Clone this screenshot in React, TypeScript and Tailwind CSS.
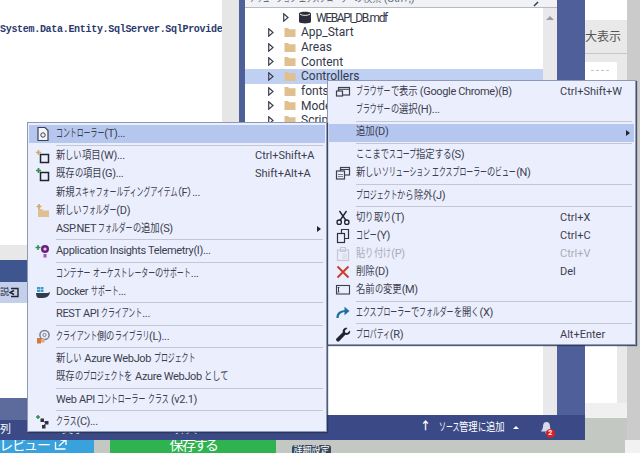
import React from "react";

type MenuEntry =
  | { sep: true }
  | {
      label: string;
      icon?: React.ReactNode;
      shortcut?: string;
      arrow?: boolean;
      active?: boolean;
      disabled?: boolean;
    };

// the screenshot uses a condensed UI font, so kana and kanji runs are squeezed horizontally
const Squeezed = ({ run, size, factor, cls }: { run: string; size: number; factor: number; cls: string }) => (
  <span
    className={`inline-block origin-left whitespace-nowrap [font-feature-settings:normal] ${cls}`}
    style={{ marginRight: -run.length * size * (1 - factor) }}
  >
    {run}
  </span>
);

const Narrow = ({ text }: { text: string }) => {
  const parts = text.match(/[\u30A0-\u30FF]+|[\u3040-\u309F]+|[\u4E00-\u9FFF]+|[^\u3040-\u30FF\u4E00-\u9FFF]+/g) ?? [];
  return (
    <>
      {parts.map((part, i) => {
        if (/[\u30A0-\u30FF]/.test(part))
          return <Squeezed key={i} run={part} size={11.5} factor={0.6} cls="text-[11.5px] scale-x-[0.6]" />;
        if (/[\u3040-\u309F]/.test(part))
          return <Squeezed key={i} run={part} size={11} factor={0.75} cls="text-[11px] scale-x-[0.75]" />;
        if (/[\u4E00-\u9FFF]/.test(part))
          return <Squeezed key={i} run={part} size={11} factor={0.85} cls="text-[11px] scale-x-[0.85]" />;
        return (
          <span key={i} className="tracking-[-0.35px]">
            {part}
          </span>
        );
      })}
    </>
  );
};

const Glyph = ({ children }: { children: React.ReactNode }) => (
  <svg width="16" height="16" viewBox="0 0 16 16" fill="none">
    {children}
  </svg>
);

const ControllerIcon = () => (
  <Glyph>
    <path d="M3 1.500h7l3 3v10H3z" fill="#f4f5fa" stroke="#3c4150" strokeWidth="1.200" />
    <circle cx="8" cy="9" r="2.200" stroke="#3c4150" strokeWidth="1" />
  </Glyph>
);

const NewItemIcon = ({ green }: { green?: boolean }) => (
  <Glyph>
    <rect x="5.500" y="5.500" width="8" height="8" stroke="#20242f" strokeWidth="1.500" />
    <path d="M3.500 1v5M1 3.500h5" stroke={green ? "#2f8f4a" : "#d0a872"} strokeWidth="1.700" />
  </Glyph>
);

const NewFolderIcon = () => (
  <Glyph>
    <path d="M3 6h4l1 1.500h6v6.500H3z" fill="#e0c08f" />
    <path d="M4 1v5M1.500 3.500h5" stroke="#d0a872" strokeWidth="1.700" />
  </Glyph>
);

const InsightsIcon = () => (
  <Glyph>
    <circle cx="10" cy="6" r="4" fill="#68217a" />
    <circle cx="10" cy="6" r="1.600" fill="#e6c8ea" />
    <path d="M8.500 11h3v3.500h-3z" fill="#a05ab0" />
    <path d="M3 2v5M.5 4.500h5" stroke="#2f8f4a" strokeWidth="1.500" />
  </Glyph>
);

const DockerIcon = () => (
  <Glyph>
    <path d="M2 3h3v2.500H2zM5.500 3h3v2.500h-3zM2 6h3v2H2zM5.500 6h3v2h-3z" fill="#3f9cc9" />
    <path d="M1 9h12l2-1c0 3-3 6-7 6H4c-2 0-3-2-3-5z" fill="#2f3b4f" />
  </Glyph>
);

const LibraryIcon = () => (
  <Glyph>
    <circle cx="9.500" cy="6" r="4.600" stroke="#7b7f8c" strokeWidth="1.500" />
    <circle cx="9.500" cy="6" r="1.600" stroke="#7b7f8c" />
    <rect x="2" y="9" width="4" height="5.500" fill="#d9773a" />
    <rect x="6" y="10" width="3.500" height="3.500" fill="#e9a77c" />
  </Glyph>
);

const ClassIcon = () => (
  <Glyph>
    <path d="M3 1v4M1 3h4" stroke="#2f8f4a" strokeWidth="1.400" />
    <rect x="5.500" y="4.500" width="3.500" height="3.500" fill="#2d3140" />
    <rect x="10" y="7" width="3.500" height="3.500" fill="#2d3140" />
    <rect x="7" y="11" width="3.500" height="3.500" fill="#2d3140" />
    <path d="M8 7l3 2M10 10l-1 2" stroke="#2d3140" />
  </Glyph>
);

const BrowserIcon = () => (
  <Glyph>
    <rect x="3.500" y="3.500" width="11" height="7.500" stroke="#3c4150" strokeWidth="1.200" />
    <path d="M3.500 5.300h11" stroke="#3c4150" />
    <rect x="1.500" y="7" width="6" height="5" fill="#eaeefb" stroke="#3c4150" strokeWidth="1.200" />
  </Glyph>
);

const NewViewIcon = () => (
  <Glyph>
    <rect x="5.500" y="2.500" width="9" height="7.500" stroke="#3c4150" strokeWidth="1.200" />
    <path d="M5.500 4.500h9" stroke="#3c4150" />
    <rect x="1.500" y="6" width="8" height="8" fill="#eaeefb" stroke="#3c4150" strokeWidth="1.200" />
    <path d="M3 9.500h5M3 11.500h5" stroke="#7d8290" />
  </Glyph>
);

const CutIcon = () => (
  <Glyph>
    <path d="M4.500 1l6.500 9.500M11.500 1L5 10.500" stroke="#20242f" strokeWidth="1.400" />
    <circle cx="4.200" cy="12.200" r="2.200" stroke="#20242f" strokeWidth="1.300" />
    <circle cx="11.800" cy="12.200" r="2.200" stroke="#20242f" strokeWidth="1.300" />
  </Glyph>
);

const CopyIcon = () => (
  <Glyph>
    <path d="M6.500 5V1.500h7v9H10" stroke="#2d3140" strokeWidth="1.200" />
    <rect x="2.500" y="5.500" width="7" height="9" stroke="#2d3140" strokeWidth="1.200" />
  </Glyph>
);

const PasteIcon = () => (
  <Glyph>
    <rect x="2.500" y="4" width="11" height="10.500" stroke="#c5c8d2" strokeWidth="1.200" />
    <rect x="5.500" y="1.500" width="5" height="4" stroke="#c5c8d2" />
    <rect x="7" y="7.500" width="5" height="6" fill="#dfe2ec" />
  </Glyph>
);

const DeleteIcon = () => (
  <Glyph>
    <path d="M2.500 2.500l11 11M13.500 2.500l-11 11" stroke="#c8402f" strokeWidth="2" />
  </Glyph>
);

const RenameIcon = () => (
  <Glyph>
    <rect x="1.500" y="3.500" width="13" height="8.500" stroke="#3c4150" strokeWidth="1.100" />
    <path d="M3.500 5.500v4.500M2.600 5.500h1.800M2.600 10h1.800" stroke="#3c4150" />
  </Glyph>
);

const OpenIcon = () => (
  <Glyph>
    <path d="M2.500 13c0-5 3-7 9-7" stroke="#1f6f9f" strokeWidth="2.200" />
    <path d="M9.500 1.800l5 4.200-5 4.200z" fill="#1f6f9f" />
  </Glyph>
);

const WrenchIcon = () => (
  <Glyph>
    <path
      d="M15 3.500l-2.700 2.600-2-.4-.5-2L12.500 1C10 .2 7.300 2 7.800 5.200L1.500 11.500c-1 1-.2 2.200.6 2.800.7.500 1.500.4 2-.1l6.200-6.400c3 .800 5.500-1.500 4.700-4.300z"
      fill="#20242f"
    />
  </Glyph>
);

const addMenu: MenuEntry[] = [
  { label: "コントローラー(T)...", icon: <ControllerIcon />, active: true },
  { sep: true },
  { label: "新しい項目(W)...", icon: <NewItemIcon />, shortcut: "Ctrl+Shift+A" },
  { label: "既存の項目(G)...", icon: <NewItemIcon green />, shortcut: "Shift+Alt+A" },
  { label: "新規スキャフォールディングアイテム（F）..." },
  { label: "新しいフォルダー(D)", icon: <NewFolderIcon /> },
  { label: "ASP.NET フォルダーの追加(S)", arrow: true },
  { sep: true },
  { label: "Application Insights Telemetry(I)...", icon: <InsightsIcon /> },
  { sep: true },
  { label: "コンテナー オーケストレーターのサポート..." },
  { label: "Docker サポート...", icon: <DockerIcon /> },
  { sep: true },
  { label: "REST API クライアント..." },
  { sep: true },
  { label: "クライアント側のライブラリ(L)...", icon: <LibraryIcon /> },
  { sep: true },
  { label: "新しい Azure WebJob プロジェクト" },
  { label: "既存のプロジェクトを Azure WebJob として" },
  { sep: true },
  { label: "Web API コントローラー クラス (v2.1)" },
  { sep: true },
  { label: "クラス(C)...", icon: <ClassIcon /> },
];

const contextMenu: MenuEntry[] = [
  { label: "ブラウザーで表示 (Google Chrome)(B)", icon: <BrowserIcon />, shortcut: "Ctrl+Shift+W" },
  { label: "ブラウザーの選択(H)..." },
  { sep: true },
  { label: "追加(D)", arrow: true, active: true },
  { sep: true },
  { label: "ここまでスコープ指定する(S)" },
  { label: "新しいソリューション エクスプローラーのビュー(N)", icon: <NewViewIcon /> },
  { sep: true },
  { label: "プロジェクトから除外(J)" },
  { sep: true },
  { label: "切り取り(T)", icon: <CutIcon />, shortcut: "Ctrl+X" },
  { label: "コピー(Y)", icon: <CopyIcon />, shortcut: "Ctrl+C" },
  { label: "貼り付け(P)", icon: <PasteIcon />, shortcut: "Ctrl+V", disabled: true },
  { label: "削除(D)", icon: <DeleteIcon />, shortcut: "Del" },
  { label: "名前の変更(M)", icon: <RenameIcon /> },
  { sep: true },
  { label: "エクスプローラーでフォルダーを開く(X)", icon: <OpenIcon /> },
  { sep: true },
  { label: "プロパティ(R)", icon: <WrenchIcon />, shortcut: "Alt+Enter" },
];

const Menu = ({
  items,
  className,
  shortcutWidth,
}: {
  items: MenuEntry[];
  className: string;
  shortcutWidth: string;
}) => (
  <div
    className={`absolute border border-[#8d9ab5] bg-[#ebeefc] px-px pb-px pt-[2px] text-[11px] text-[#3b3e50] shadow-[1px_1px_1px_rgba(40,50,80,0.8)] ${className}`}
  >
    {items.map((item, i) =>
      "sep" in item ? (
        <div key={i} className="flex h-[4.5px] items-center pl-[27px] pr-[2px]">
          <div className="h-px w-full bg-[#c3c7d3]" />
        </div>
      ) : (
        <div
          key={i}
          className={`flex h-[18px] items-center ${item.active ? "bg-[#b5c7ef]" : ""} ${item.disabled ? "text-[#a9adba]" : ""}`}
        >
          <div className="flex w-[27px] shrink-0 justify-center">{item.icon}</div>
          <span className="min-w-0 flex-1 whitespace-nowrap">
            <Narrow text={item.label} />
          </span>
          {item.shortcut && <span className={`whitespace-nowrap ${shortcutWidth}`}>{item.shortcut}</span>}
          {item.arrow && <span className="mr-[4px] h-0 w-0 border-y-[3px] border-l-[4px] border-y-transparent border-l-[#20242f]" />}
        </div>
      ),
    )}
  </div>
);

const treeRows = ["App_Start", "Areas", "Content", "Controllers", "fonts", "Models", "Scripts"];

const TreeArrow = () => (
  <svg width="6" height="9" viewBox="0 0 6 9" fill="none">
    <path d="M.7 .8l4.300 3.700L.7 8.200z" stroke="#3b3e50" strokeWidth="1.200" />
  </svg>
);

const SolutionExplorer = () => (
  <div className="flex w-[312px] shrink-0 flex-col">
    <div className="flex h-[8px] items-end justify-between overflow-hidden border-b border-[#b7bac4] bg-[#f1f2f6] pl-[4px] pr-[14px] text-[11px] leading-[16px] text-[#6b6e7a]">
      <span className="whitespace-nowrap">
        <Narrow text="ソリューション エクスプローラーの検索 (Ctrl+;)" />
      </span>
      <svg width="10" height="8" viewBox="0 0 10 8" fill="none">
        <path d="M1 7l4-4" stroke="#3b3e50" strokeWidth="1.600" />
      </svg>
    </div>
    <div className="flex min-h-0 flex-1">
      <div className="min-w-0 flex-1 bg-white pt-[2px] text-[12px] text-[#33384a]">
        <div className="flex h-[15px] items-center pl-[38px]">
          <TreeArrow />
          <svg className="ml-[10px]" width="12" height="13" viewBox="0 0 12 13">
            <path d="M0 2.500C0 0 12 0 12 2.500v8C12 13 0 13 0 10.500z" fill="#2b2e38" />
            <path d="M1 3.200c2 1.600 8 1.600 10 0" stroke="#e8e8ee" fill="none" />
          </svg>
          <span className="ml-[5px] tracking-[-1.4px]">WEBAPI_DB.mdf</span>
        </div>
        {treeRows.map((name) => (
          <div
            key={name}
            className={`flex h-[14.7px] items-center whitespace-nowrap pl-[23px] ${name === "Controllers" ? "bg-[#bfd0f2]" : ""}`}
          >
            <TreeArrow />
            <svg className="ml-[10px]" width="12" height="11" viewBox="0 0 12 12">
              <path d="M0 1h4l1 1.500h7v8.500h-12z" fill="#e0c08f" />
            </svg>
            <span className="ml-[5px]">{name}</span>
          </div>
        ))}
      </div>
      <div className="flex w-[14px] shrink-0 justify-center bg-[#e9e9ec] pt-[8px]">
        <span className="h-0 w-0 border-x-[4px] border-b-[4px] border-x-transparent border-b-[#9a9ca3]" />
      </div>
    </div>
  </div>
);

const EditorColumn = () => (
  <div className="flex w-[239px] shrink-0 flex-col">
    <div className="flex h-[245px] shrink-0">
      <div className="w-[222px] overflow-hidden bg-white pt-[23px] font-['Liberation_Mono',monospace] text-[10px] leading-[14px] tracking-[-0.3px] text-[#2a3a6e]">
        <span className="whitespace-nowrap font-bold">System.Data.Entity.SqlServer.SqlProvide</span>
      </div>
      <div className="flex-1 bg-[#e6e6e6]" />
    </div>
    <div className="h-[15px] shrink-0 bg-[#e8e8e8]" />
    <div className="h-[22px] shrink-0 bg-[#3f5590]" />
    <div className="flex h-[21px] shrink-0 items-center overflow-hidden bg-[#c4cfeb] text-[9px] text-[#20242f]">
      <span className="whitespace-nowrap leading-none">説</span>
      <svg className="-ml-px" width="11" height="11" viewBox="0 0 11 11" fill="none">
        <path d="M3 1.500h7v8H3M6 7.500L2 5.500 6 3.500" stroke="#20242f" strokeWidth="1.400" />
      </svg>
    </div>
    <div className="h-[95px] shrink-0 bg-white" />
    <div className="h-[22px] shrink-0 bg-[#5c6b9c]" />
    <div className="flex flex-1 items-center bg-[#3b4a86] text-[11px] text-white">
      <span className="w-[62px]">列</span>
      <span className="w-[113px]">文字</span>
      <span>挿入</span>
    </div>
  </div>
);

const RightPane = () => (
  <div className="flex w-[55px] shrink-0">
    <div className="flex w-[42px] flex-col">
      <div className="h-[20px] shrink-0 bg-white" />
      <div className="h-[42px] shrink-0 overflow-hidden bg-[#e9e9e9] pt-[9px]">
        <div className="whitespace-nowrap border-b border-[#c8c8c8] pb-[8px] text-[12px] leading-[16px] text-[#555]">
          大表示
        </div>
      </div>
      <div className="flex h-[341px] shrink-0">
        <div className="w-[32px] rounded-tr-[2px] bg-white pl-[6px] pt-[8px]">
          <div className="w-[18px] border-t border-dashed border-[#c4c4c4]" />
        </div>
        <div className="flex-1 bg-[#e9e9e9]" />
      </div>
      <div className="h-[15px] shrink-0 bg-[#f0f0f0]" />
      <div className="flex-1 bg-[#c3c8c3]" />
    </div>
    <div className="flex-1 bg-[#cbcbcb]" />
  </div>
);

export default function App() {
  return (
    <div className="relative flex h-[453px] w-[640px] flex-col overflow-hidden bg-[#f2f2f2] font-['Roboto','Noto_Sans_CJK_JP',sans-serif] [font-feature-settings:'palt']">
      <div className="flex h-[440px] shrink-0">
        <EditorColumn />
        <div className="flex w-[346px] shrink-0 flex-col bg-[#4f5f99]">
          <div className="flex h-[415px] shrink-0 pl-[6px]">
            <SolutionExplorer />
          </div>
          <div className="relative flex flex-1 items-center bg-[#3b4a86] pl-[181px] text-[11px] text-white">
            <span className="mr-[8px] text-[11px] font-bold">↑</span>
            <span className="whitespace-nowrap">
              <Narrow text="ソース管理に追加" />
            </span>
            <span className="ml-[8px] h-0 w-0 border-x-[3px] border-b-[3px] border-x-transparent border-b-white" />
            <span className="relative ml-[21px]">
              <svg width="13" height="14" viewBox="0 0 13 14">
                <path d="M6.500 1C4 1 3 3 3 5.500 3 8 1.500 9 1 10.500h11C11.500 9 10 8 10 5.500 10 3 9 1 6.500 1zM5 11.500h3L6.500 13.500z" fill="#d4d8e8" />
              </svg>
              <span className="absolute -bottom-[3px] left-[6px] flex h-[9px] w-[9px] items-center justify-center rounded-full bg-[#d8201f] text-[7px] font-bold leading-none text-white">
                2
              </span>
            </span>
          </div>
        </div>
        <RightPane />
      </div>

      <div className="flex flex-1 overflow-hidden bg-[#c3c8c3] text-white">
        <div className="flex w-[94px] shrink-0 items-center gap-[3px] overflow-hidden bg-[#39a1dc] pb-[4px] text-[14px] leading-none">
          <span className="whitespace-nowrap">レビュー</span>
          <svg width="13" height="11" viewBox="0 0 13 11" fill="none">
            <path d="M1.500 3v7h10M5 7l6-5.500M6.500 1H12v5" stroke="white" strokeWidth="1.300" />
          </svg>
        </div>
        <div className="ml-[16px] flex w-[166px] shrink-0 items-center justify-center bg-[#2fb34f] pb-[4px] text-[14px] leading-none tracking-[-1.5px]">
          保存する
        </div>
        <div className="ml-[16px] mt-[5px] h-[12px] w-[39px] shrink-0 overflow-hidden rounded-t-[3px] bg-[#36465a] text-center text-[9px] leading-[11px]">
          詳細設定
        </div>
        <div className="ml-auto w-[15px] bg-[#f2f2f2]" />
      </div>

      <Menu items={contextMenu} className="left-[327px] top-[80px] h-[265px] w-[309px]" shortcutWidth="w-[74px]" />
      <Menu items={addMenu} className="left-[27px] top-[122px] h-[310px] w-[300px]" shortcutWidth="w-[70px]" />
    </div>
  );
}
